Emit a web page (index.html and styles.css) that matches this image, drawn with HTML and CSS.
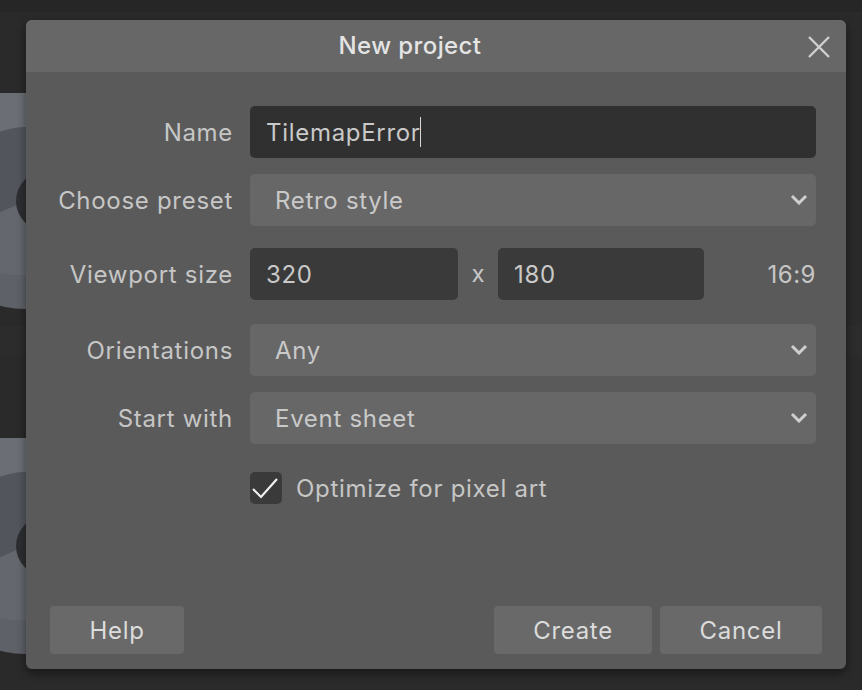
FILE: index.html
```html
<!DOCTYPE html>
<html>
<head>
<meta charset="utf-8">
<link rel="stylesheet" href="styles.css">
</head>
<body>
<div class="desk">
  <div class="band band-top"></div>
  <div class="band band-mid"></div>
  <svg class="logo logo-1" width="140" height="220" viewBox="0 0 140 220">
    <circle cx="40" cy="108" r="108" fill="#5e6268"/>
    <path d="M40 108 L-68 60 A108 108 0 0 1 100 18 Z" fill="#6b6f75"/>
    <circle cx="40" cy="108" r="74" fill="#52565c"/>
    <path d="M40 108 L-34 140 A74 74 0 0 0 40 182 Z" fill="#64686e"/>
    <circle cx="60" cy="108" r="30" fill="#2c2e31"/>
  </svg>
  <svg class="logo logo-2" width="140" height="220" viewBox="0 0 140 220">
    <circle cx="40" cy="108" r="108" fill="#5e6268"/>
    <path d="M40 108 L-68 60 A108 108 0 0 1 100 18 Z" fill="#6b6f75"/>
    <circle cx="40" cy="108" r="74" fill="#52565c"/>
    <path d="M40 108 L-34 140 A74 74 0 0 0 40 182 Z" fill="#64686e"/>
    <circle cx="60" cy="108" r="30" fill="#2c2e31"/>
  </svg>

  <div class="dialog">
    <div class="titlebar">
      <span class="title">New project</span>
      <svg class="close" width="22" height="22" viewBox="0 0 22 22">
        <path d="M1 1 L21 21 M21 1 L1 21" stroke="#cfcfcf" stroke-width="2.4" fill="none"/>
      </svg>
    </div>
    <div class="body">
      <div class="row row-name">
        <label class="lbl">Name</label>
        <div class="field input dark">TilemapError<span class="caret"></span></div>
      </div>
      <div class="row row-preset">
        <label class="lbl">Choose preset</label>
        <div class="field select">Retro style
          <svg class="chev" width="18" height="11" viewBox="0 0 18 11"><path d="M2 2 L9 9 L16 2" stroke="#cfcfcf" stroke-width="3" fill="none"/></svg>
        </div>
      </div>
      <div class="row row-size">
        <label class="lbl">Viewport size</label>
        <div class="size">
          <div class="field input num">320</div>
          <span class="times">x</span>
          <div class="field input num">180</div>
          <span class="ratio">16:9</span>
        </div>
      </div>
      <div class="row row-orient">
        <label class="lbl">Orientations</label>
        <div class="field select">Any
          <svg class="chev" width="18" height="11" viewBox="0 0 18 11"><path d="M2 2 L9 9 L16 2" stroke="#cfcfcf" stroke-width="3" fill="none"/></svg>
        </div>
      </div>
      <div class="row row-start">
        <label class="lbl">Start with</label>
        <div class="field select">Event sheet
          <svg class="chev" width="18" height="11" viewBox="0 0 18 11"><path d="M2 2 L9 9 L16 2" stroke="#cfcfcf" stroke-width="3" fill="none"/></svg>
        </div>
      </div>
      <div class="row row-check">
        <span class="lbl"></span>
        <div class="check">
          <span class="box">
            <svg width="32" height="32" viewBox="0 0 32 32"><path d="M3 17 L11 25 L27 7" stroke="#f0f0f0" stroke-width="2.2" fill="none"/></svg>
          </span>
          <span class="check-text">Optimize for pixel art</span>
        </div>
      </div>
    </div>
    <div class="footer">
      <button class="btn btn-help">Help</button>
      <div class="right-btns">
        <button class="btn btn-create">Create</button>
        <button class="btn btn-cancel">Cancel</button>
      </div>
    </div>
  </div>
</div>
</body>
</html>
```

FILE: styles.css
```css
html, body {
  margin: 0;
  padding: 0;
  background: #2a2a2a;
}
body {
  width: 862px;
  height: 690px;
  overflow: hidden;
  font-family: Inter, "Open Sans", "Liberation Sans", sans-serif;
}
.desk {
  position: relative;
  width: 862px;
  height: 690px;
  background: #2a2a2a;
}
.band {
  position: absolute;
  left: 0;
  right: 0;
}
.band-top {
  top: 0;
  height: 12px;
  background: #262626;
}
.band-mid {
  top: 326px;
  height: 30px;
  background: #2c2c2c;
}
.logo {
  position: absolute;
  left: -14px;
}
.logo-1 { top: 93px; }
.logo-2 { top: 438px; }

.dialog {
  position: absolute;
  left: 26px;
  top: 20px;
  width: 820px;
  height: 649px;
  background: #5a5a5a;
  border-radius: 6px;
  overflow: hidden;
  box-shadow: 0 4px 10px rgba(0,0,0,0.45);
  display: flex;
  flex-direction: column;
}
.titlebar {
  height: 52px;
  background: #676767;
  display: flex;
  align-items: center;
  justify-content: center;
  position: relative;
  flex: none;
  padding-right: 52px;
}
.title {
  color: #e4e4e4;
  font-size: 24px;
  font-weight: 500;
  letter-spacing: 0.4px;
  padding-bottom: 2px;
}
.close {
  position: absolute;
  right: 16px;
  top: 16px;
}
.body {
  flex: 1;
  padding: 34px 30px 0 0;
  display: flex;
  flex-direction: column;
}
.row {
  display: flex;
  align-items: center;
}
.lbl {
  width: 224px;
  flex: none;
  text-align: right;
  padding-right: 17px;
  color: #c6c6c6;
  font-size: 24px;
  letter-spacing: 0.7px;
  box-sizing: border-box;
  white-space: nowrap;
}
.field {
  flex: 1;
  height: 52px;
  border-radius: 5px;
  box-sizing: border-box;
  display: flex;
  align-items: center;
  color: #c9c9c9;
  font-size: 24px;
  letter-spacing: 0.7px;
  position: relative;
}
.input {
  background: #3a3a3a;
  padding-left: 16px;
}
.input.dark {
  background: #303030;
}
.caret {
  display: inline-block;
  width: 1.5px;
  height: 30px;
  background: #d8d8d8;
  margin-left: -1px;
}
.select {
  background: #676767;
  padding-left: 25px;
}
.chev {
  position: absolute;
  right: 8px;
  top: 20px;
}
.row-preset { margin-top: 16px; }
.row-size { margin-top: 22px; }
.row-orient { margin-top: 24px; }
.row-start { margin-top: 16px; }
.row-check { margin-top: 28px; }

.size {
  flex: 1;
  display: flex;
  align-items: center;
}
.num {
  flex: none;
  width: 208px;
}
.size .num:nth-child(3) { width: 206px; }
.times {
  width: 40px;
  text-align: center;
  color: #c6c6c6;
  font-size: 24px;
  padding-bottom: 2px;
}
.ratio {
  flex: 1;
  text-align: right;
  color: #c6c6c6;
  font-size: 24px;
  letter-spacing: 0.5px;
}
.check {
  display: flex;
  align-items: center;
}
.box {
  width: 32px;
  height: 32px;
  border-radius: 5px;
  background: #3a3a3a;
  display: block;
}
.box svg { display: block; }
.check-text {
  margin-left: 14px;
  color: #c6c6c6;
  font-size: 24px;
  letter-spacing: 0.7px;
}
.footer {
  flex: none;
  display: flex;
  justify-content: space-between;
  align-items: flex-end;
  padding: 0 24px 15px 24px;
}
.right-btns {
  display: flex;
  gap: 8px;
}
.btn {
  height: 48px;
  border: none;
  border-radius: 4px;
  background: #696969;
  color: #dcdcdc;
  font-family: Inter, "Open Sans", "Liberation Sans", sans-serif;
  font-size: 24px;
  letter-spacing: 0.7px;
  padding: 0;
}
.btn-help { width: 134px; }
.btn-create { width: 158px; }
.btn-cancel { width: 162px; }
```
